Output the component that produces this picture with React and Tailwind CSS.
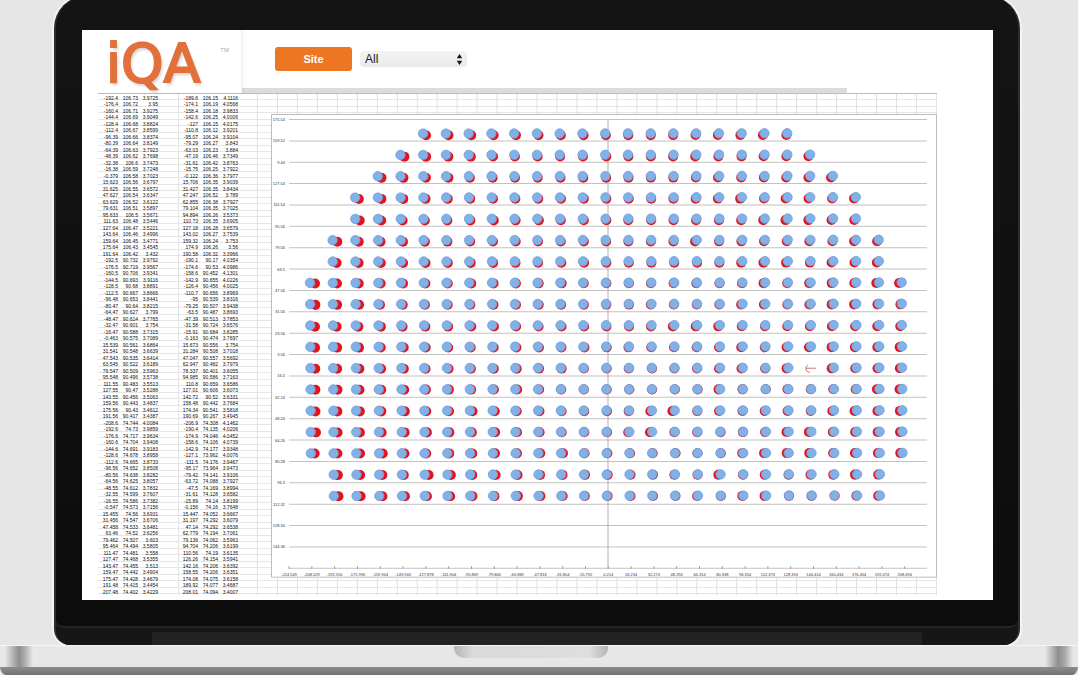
import React from "react";

const MEASUREMENTS = `
-192.4 106.73 3.9725 -189.6 106.15 4.1116
-176.4 106.72 3.95 -174.1 106.19 4.0568
-160.4 106.71 3.9275 -158.4 106.18 3.9833
-144.4 106.69 3.9049 -142.6 106.25 4.0006
-128.4 106.68 3.8824 -127 106.15 4.0175
-112.4 106.67 3.8599 -110.8 106.12 3.9201
-96.39 106.66 3.8374 -95.07 106.24 3.9104
-80.39 106.64 3.8149 -79.29 106.27 3.843
-64.39 106.63 3.7923 -63.03 106.23 3.884
-48.39 106.62 3.7698 -47.19 106.46 3.7349
-32.38 106.6 3.7473 -31.61 106.42 3.8763
-16.38 106.59 3.7248 -15.75 106.25 3.7922
-0.379 106.58 3.7023 -0.122 106.36 3.7977
15.623 106.56 3.6797 15.706 106.35 3.9039
31.625 106.55 3.6572 31.427 106.35 3.8434
47.627 106.54 3.6347 47.247 106.52 3.789
63.629 106.52 3.6122 62.855 106.38 3.7927
79.631 106.51 3.5897 79.104 106.35 3.7025
95.633 106.5 3.5671 94.894 106.26 3.5373
111.63 106.48 3.5446 110.73 106.35 3.6905
127.64 106.47 3.5221 127.18 106.28 3.6579
143.64 106.46 3.4996 143.02 106.27 3.7539
159.64 106.45 3.4771 159.32 106.24 3.753
175.64 106.43 3.4545 174.9 106.26 3.56
191.64 106.42 3.432 190.58 106.32 3.3966
-192.5 90.732 3.9792 -190.1 90.17 4.0354
-176.5 90.719 3.9567 -174.6 90.53 4.0986
-160.5 90.706 3.9341 -158.6 90.452 4.1301
-144.5 90.693 3.9116 -142.9 90.655 4.0226
-128.5 90.68 3.8891 -126.4 90.456 4.0025
-112.5 90.667 3.8666 -110.7 90.656 3.8969
-96.48 90.653 3.8441 -95 90.539 3.8316
-80.47 90.64 3.8215 -79.25 90.507 3.9438
-64.47 90.627 3.799 -63.5 90.487 3.8693
-48.47 90.614 3.7765 -47.39 90.513 3.7853
-32.47 90.601 3.754 -31.58 90.724 3.6576
-16.47 90.588 3.7315 -15.91 90.684 3.8285
-0.463 90.575 3.7089 -0.163 90.474 3.7697
15.539 90.561 3.6864 15.673 90.556 3.754
31.541 90.548 3.6639 31.284 90.508 3.7018
47.543 90.535 3.6414 47.047 90.557 3.5692
63.545 90.522 3.6189 62.947 90.482 3.7979
79.547 90.509 3.5963 78.337 90.401 3.6055
95.548 90.496 3.5738 94.985 90.586 3.7163
111.55 90.483 3.5513 110.8 90.659 3.6586
127.55 90.47 3.5288 127.01 90.606 3.6073
143.55 90.456 3.5063 142.72 90.52 3.6331
159.56 90.443 3.4837 158.48 90.442 3.7684
175.56 90.43 3.4612 174.34 90.541 3.5818
191.56 90.417 3.4387 190.69 90.267 3.4945
-208.6 74.744 4.0084 -206.9 74.308 4.1462
-192.6 74.73 3.9859 -190.4 74.135 4.0206
-176.6 74.717 3.9634 -174.9 74.046 4.0452
-160.6 74.704 3.9408 -158.6 74.106 4.0739
-144.6 74.691 3.9183 -142.9 74.177 3.9348
-128.6 74.678 3.8958 -127.1 73.962 4.0076
-112.6 74.665 3.8733 -111.5 74.176 3.9467
-96.56 74.652 3.8508 -95.17 73.964 3.9473
-80.56 74.638 3.8282 -79.42 74.141 3.9106
-64.56 74.625 3.8057 -63.72 74.088 3.7927
-48.55 74.612 3.7832 -47.5 74.169 3.8994
-32.55 74.599 3.7607 -31.61 74.128 3.6582
-16.55 74.586 3.7382 -15.89 74.14 3.8199
-0.547 74.573 3.7156 -0.156 74.16 3.7648
15.455 74.56 3.6931 15.447 74.052 3.6667
31.456 74.547 3.6706 31.197 74.292 3.6079
47.458 74.533 3.6481 47.14 74.292 3.6538
63.46 74.52 3.6256 62.779 74.194 3.7061
79.462 74.507 3.603 79.136 74.062 3.5963
95.464 74.494 3.5805 94.704 74.206 3.6199
111.47 74.481 3.558 110.56 74.19 3.6135
127.47 74.468 3.5355 126.26 74.154 3.5941
143.47 74.455 3.513 142.16 74.206 3.6392
159.47 74.442 3.4904 158.55 74.206 3.6351
175.47 74.428 3.4679 174.08 74.075 3.6158
191.48 74.415 3.4454 189.92 74.077 3.4687
207.48 74.402 3.4229 208.01 74.094 3.4007
`
  .trim()
  .split("\n")
  .map((line) => line.split(" "));

// One entry per plotted row: first column, vertical drift and the horizontal
// drift of every point, both in tenths of a chart unit before DRIFT_SCALE.
const DRIFT_SCALE = 0.13;
const DOT_ROWS = [
  [5, 13, [22, 20, 20, 17, 14, 12, 9, 9, 5, 3, 1, -2, -5, -8, -10, -12, -6]],
  [4, 13, [30, 22, 18, 16, 12, 5, 5, 3, 4, 8, 3, 1, -3, -8, -5, -2, -7, -7, -12]],
  [3, 12, [28, 22, 20, 18, 8, 8, 5, 5, 5, 5, 6, 3, 0, -2, -4, -9, -5, -6, -9, -13, -14]],
  [2, 10, [28, 26, 20, 16, 12, 10, 10, 7, 8, 8, 9, 7, 4, 2, -2, -6, -10, -14, -5, -14, -13, -7, -13]],
  [2, 12, [34, 24, 14, 10, 8, 10, 15, 8, 12, 6, 8, 6, 0, 1, -2, -4, -3, -7, -12, -16, -15, -12, -12]],
  [1, 11, [36, 26, 18, 16, 10, 8, 8, 8, 8, 5, 5, 7, 4, 0, -2, -4, -12, -3, -6, -7, -7, -8, -6, -14, -12]],
  [1, 11, [30, 24, 20, 16, 14, 10, 11, 9, 6, 5, 8, 8, 5, 2, 1, 2, 3, -1, -8, -12, -13, -5, -13, -12, -15]],
  [0, 5, [38, 32, 24, 18, 15, 12, 9, 15, 11, 8, 8, 10, 5, 4, 2, -3, -4, -4, -1, -3, -12, -5, -11, -13, -14, -20, -20]],
  [0, 5, [40, 32, 26, 12, 12, 8, 8, 7, 10, 8, 8, 5, 5, 3, 2, -5, -3, -2, -3, -10, -10, -5, -10, -14, -16, -12, -10]],
  [0, 9, [36, 28, 20, 18, 10, 10, 10, 13, 13, 8, 6, 8, 6, 3, 2, -4, -11, -10, -12, -6, -3, -6, -7, -13, -9, -14, -12]],
  [0, 6, [36, 31, 24, 16, 18, 12, 10, 8, 10, 10, 8, 6, 8, 4, -3, -3, -3, -4, -7, -11, -5, -12, -15, -16, -12, -14, -18]],
  [0, 5, [37, 30, 26, 18, 18, 10, 12, 9, 10, 11, 8, 7, 3, 3, -2, 2, -1, -3, -8, -10, -3, -13, null, -16, -10, -14, -17]],
  [0, 2, [37, 32, 26, 18, 20, 12, 14, 10, 10, 14, 8, 3, 2, 3, 2, 2, 2, 2, -12, -3, 1, -7, -3, -5, -7, -19, -20]],
  [0, 5, [37, 30, 28, 18, 24, 14, 14, 20, 16, 10, 10, 5, 4, 4, -4, -12, -18, -2, -9, -4, -8, -7, -4, -13, -17, -16, -18]],
  [0, 3, [40, 31, 28, 20, 22, 18, 16, 14, 18, 11, 10, 5, 4, 4, -8, -16, -3, -3, 2, -2, -6, -16, -19, -10, -13, -15, -18]],
  [0, 1, [29, 29, 28, 28, 20, 12, 14, 16, 16, 10, 14, 14, 5, 6, 5, 4, 5, -2, 3, -7, -14, -15, -17, -8, -16, -14, -17]],
  [1, 3, [32, 28, 24, 14, 30, 26, 16, 20, 14, 12, 10, 8, 7, 8, 5, -5, -2, -17, -2, -10, -2, -8, -8, -16, -12]],
  [1, 2, [36, 31, 24, 22, 16, 20, 16, 10, 16, 14, 10, 6, 6, 7, 5, 3, -6, 2, -8, -12, 1, -1, 2, -6, -13]],
];

const Y_LABELS = [
  "175.54", "159.52", "9.44", "127.54", "111.54", "95.56", "79.56", "63.5", "47.56", "31.56", "23.56",
  "3.56", "16.5", "32.24", "48.24", "64.26", "80.28", "96.3", "112.32", "128.34", "144.36",
];

const X_LABELS = [
  "-224.549", "-208.529", "-192.550", "-175.990", "-159.904", "-143.944", "-127.878", "-111.904",
  "-95.869", "-79.860", "-63.869", "-47.816", "-31.804", "-15.792", "0.214", "16.234", "32.274",
  "48.294", "64.314", "80.338", "96.354", "112.374", "128.394", "144.414", "160.434", "176.454",
  "192.474", "208.494",
];

function Logo() {
  return (
    <div className="relative flex h-[63px] w-36 items-center border-r border-[#f0f0f0] pl-2 shadow-[2px_0_3px_rgba(0,0,0,0.04)]">
      <span className="mt-1 font-['DejaVu_Sans'] text-[54px] leading-[56px] text-[#e2703a] [-webkit-text-stroke:2px_#e2703a] [text-shadow:2px_3px_3px_rgba(0,0,0,0.18)]">
        iQA
      </span>
      <span className="absolute top-4 right-3 text-[6px] leading-[8px] text-[#aaaaaa]">TM</span>
    </div>
  );
}

function SiteFilter() {
  return (
    <form className="flex items-center gap-2 pt-[17px] pl-[33px]" onSubmit={(e) => e.preventDefault()}>
      <button
        type="button"
        className="h-6 w-[77px] rounded-[3px] bg-[#ec7622] text-[11px] leading-4 font-bold text-white"
      >
        Site
      </button>
      <div className="relative flex items-center">
        <select
          aria-label="Site"
          defaultValue="all"
          className="h-4 w-[107px] appearance-none rounded-[4px] bg-linear-to-b from-[#f4f4f4] to-[#e9e9e9] pl-[5px] text-[12px] leading-4 text-[#1c1c1c]"
        >
          <option value="all">All</option>
        </select>
        <svg className="pointer-events-none absolute right-1 h-[11px] w-[7px]" viewBox="0 0 7 11" aria-hidden="true">
          <path d="M3.500 0L6.200 4.300H.8zM3.500 11L.8 6.700h5.400z" fill="#111111" />
        </svg>
      </div>
    </form>
  );
}

function DataTable() {
  return (
    <table
      aria-label="Planned and measured positions"
      className="w-35 shrink-0 table-fixed border-collapse self-start text-right text-[5px] leading-[6px] text-[#111111]"
    >
      <tbody>
        {MEASUREMENTS.map((row, i) => (
          <tr key={i} className="odd:h-[7px] even:h-[6px]">
            {row.slice(0, 3).map((value, k) => (
              <td key={k} className="p-0">{value}</td>
            ))}
            <td className="border-r border-[#e4e4e4] p-0"></td>
            {row.slice(3).map((value, k) => (
              <td key={k} className="p-0">{value}</td>
            ))}
          </tr>
        ))}
      </tbody>
    </table>
  );
}

function PositionChart() {
  const gridY = (i) => 5.5 + i * 21.34;
  const tickX = (i) => 18 + i * 22.77;
  return (
    <svg
      viewBox="0 0 665 463"
      role="img"
      aria-label="Planned and measured positions chart"
      className="mt-5 block min-w-0 flex-1 self-start bg-white"
      fontFamily="'Liberation Sans', Arial, sans-serif"
    >
      <rect x="0.5" y="0.5" width="664" height="462" fill="white" stroke="#bdbdbd" />
      {Array.from({ length: 22 }, (_, i) => (
        <line key={i} x1="18" x2="655" y1={gridY(i)} y2={gridY(i)} stroke="#c2c2c2" strokeWidth="1" />
      ))}
      {Y_LABELS.map((label, i) => (
        <text key={i} x="14" y={gridY(i) + 1.5} textAnchor="end" fontSize="4" fill="#333333">{label}</text>
      ))}
      {X_LABELS.map((label, i) => (
        <React.Fragment key={i}>
          <line x1={tickX(i)} x2={tickX(i)} y1="451.500" y2="454" stroke="#999999" strokeWidth="1" />
          <text x={tickX(i)} y="461" textAnchor="middle" fontSize="4" fill="#333333">{label}</text>
        </React.Fragment>
      ))}
      <line x1="336.500" x2="336.500" y1="5.500" y2="454" stroke="#b0b0b0" strokeWidth="1" />
      {DOT_ROWS.map(([start, drift, offsets], r) =>
        offsets.map((offset, k) => {
          const col = start + k;
          const x = 38.3 + r * 0.1 + col * 22.72;
          const y = 19.7 + r * 21.28 - col * 0.02;
          if (offset === null) {
            return (
              <path
                key={`${r}-${k}`}
                d={`M${x - 5} ${y + 0.5}h10M${x - 3} ${y - 3}q-4 3 -1 6.500q1 1 3 1.200`}
                fill="none"
                stroke="#c9505a"
                strokeWidth="0.8"
              />
            );
          }
          return (
            <g key={`${r}-${k}`}>
              <circle cx={x + offset * DRIFT_SCALE} cy={y + drift * DRIFT_SCALE} r="5" fill="#e5121e" />
              <circle cx={x} cy={y} r="4.700" fill="#82b1e8" stroke="#6f9dd6" strokeWidth="0.8" />
            </g>
          );
        })
      )}
    </svg>
  );
}

export default function App() {
  return (
    <div className="overflow-hidden bg-[#e6e6e6] font-['Liberation_Sans',Arial,sans-serif]">
      <div className="-mt-1 mr-[58px] ml-[54px] overflow-hidden rounded-t-[32px] rounded-b-[16px] border-x-2 border-[#2c2c2c] bg-[#181818] shadow-[0_0_0_2px_#f4f4f4]">
        <div className="rounded-t-[30px] rounded-b-[8px] border-b-2 border-[#242424] bg-linear-to-b from-[#141414] to-[#0c0c0c] pt-[34px] pr-[25px] pb-[26px] pl-[26px]">
          <main className="bg-white pr-14 pl-4">
            <header className="flex h-[63px]">
              <Logo />
              <div className="flex min-w-0 flex-1 flex-col justify-between">
                <SiteFilter />
                <div className="mr-[90px] h-[5px] bg-[#dcdcdc]"></div>
              </div>
            </header>
            <section className="border-t border-[#bdbdbd] pb-[5px]">
              <div className="flex bg-[linear-gradient(to_bottom,transparent_5px,#e6e6e6_5px,#e6e6e6_6px,transparent_6px,transparent_12px,#e6e6e6_12px)] bg-[length:100%_13px]">
                <DataTable />
                <div className="flex min-w-0 flex-1 bg-[linear-gradient(to_left,#e0e0e0_1px,transparent_1px)] bg-[length:calc(100%/35)_100%] pl-[33px]">
                  <PositionChart />
                </div>
              </div>
            </section>
          </main>
        </div>
        <div className="bg-[#161616] px-24 pt-1">
          <div className="h-[13px] bg-[#222222]"></div>
        </div>
      </div>
      <div className="flex h-[22px] justify-between border-t border-[#f6f6f6] bg-[#e7e7e7]">
        <div className="w-9 bg-[linear-gradient(to_right,#e7e7e7_5px,#8e8e8e_19px,#a8a8a8_24px,#e7e7e7_33px)]"></div>
        <div className="mr-4 h-3 w-[154px] rounded-b-[10px] bg-[linear-gradient(to_right,#b4b4b4,#dadada_12%,#dedede_88%,#b4b4b4)]"></div>
        <div className="w-9 bg-[linear-gradient(to_left,#e7e7e7_5px,#a8a8a8_13px,#8e8e8e_20px,#e7e7e7_33px)]"></div>
      </div>
      <div className="h-[9px] rounded-b-[16px] bg-linear-to-b from-[#8c8c8c] to-[#6f6f6f]"></div>
    </div>
  );
}
